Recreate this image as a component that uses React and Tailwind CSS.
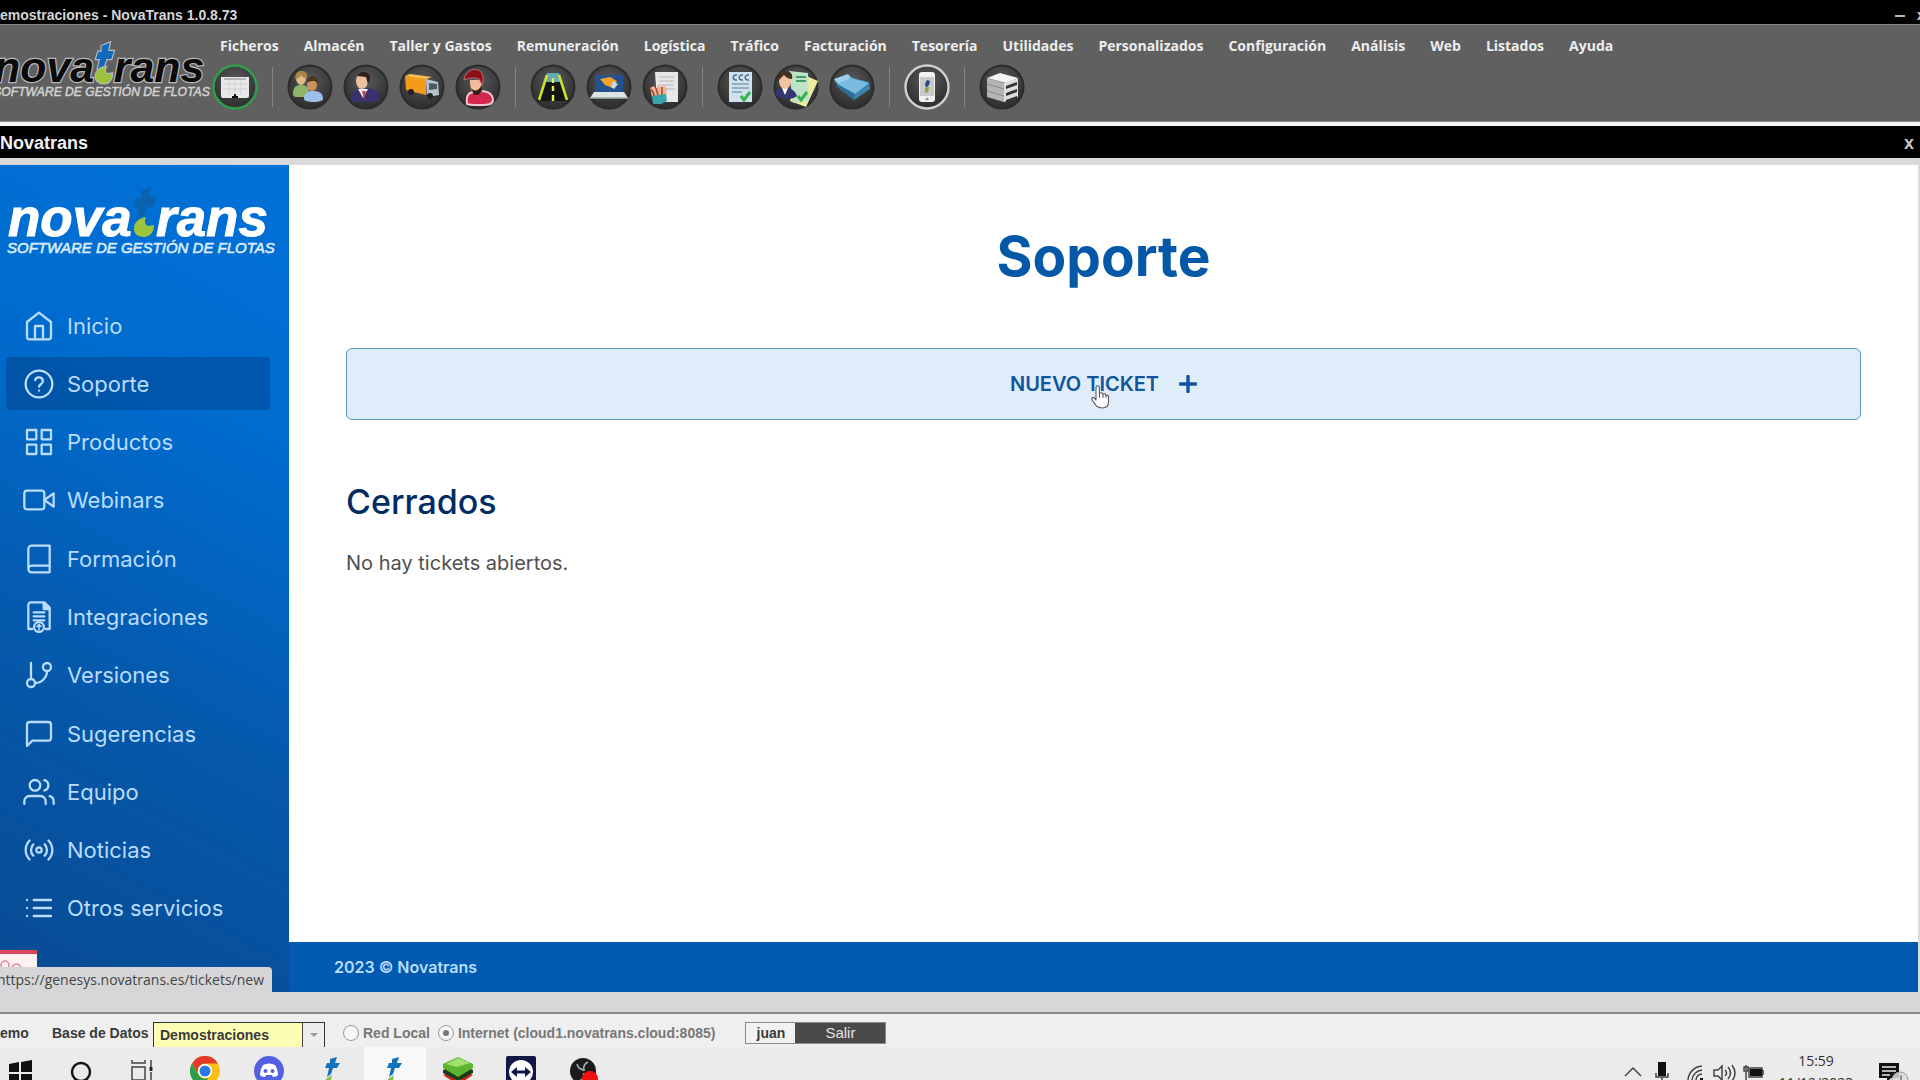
import React from "react";

const MENU = [
  "Ficheros", "Almacén", "Taller y Gastos", "Remuneración", "Logística", "Tráfico", "Facturación", "Tesorería",
  "Utilidades", "Personalizados", "Configuración", "Análisis", "Web", "Listados", "Ayuda",
];

function Logo({ className, ink, leaf, tag, glow }) {
  const halo = glow ? { stroke: "#b9b9b9", strokeWidth: 3, paintOrder: "stroke" } : {};
  const letters = glow ? halo : { stroke: ink, strokeWidth: 1 };
  return (
    <svg viewBox="0 0 262 68" className={className} role="img" aria-label="novatrans">
      <g fontFamily="Liberation Sans, Arial, sans-serif" fontWeight="700" fontStyle="italic">
        <text x="0" y="50" fontSize="53" fill={ink} {...letters}>nova</text>
        <text x="148" y="50" fontSize="53" fill={ink} {...letters}>rans</text>
        <text x="-1" y="67" fontSize="15" fontWeight="400" fill={tag} stroke={tag} strokeWidth="0.6">
          SOFTWARE DE GESTIÓN DE FLOTAS
        </text>
      </g>
      <path d="M133 5 143 1 141 11h7l-3 10h-6l-3 9c-3 0-6 2-8 5l3-14h-5l3-9h4z" fill={leaf} {...halo} />
      <path d="M138 31c-2 4-1 8 2 9l6-1c0 7-4 12-10 12-7 0-11-4-10-10 1-6 6-9 12-10z" fill="#9cc43c" {...halo} />
    </svg>
  );
}

/* ---- round toolbar icons ---- */
const TOOLS = {
  ficheros: {
    ring: "#2f9e4f",
    art: (
      <g>
        <path d="M9 13h28v19q0 2-2 2H11q-2 0-2-2z" fill="#e8e8e8" />
        <path d="M12 14h22v2H12z" fill="#b5b5b5" />
        <path d="M11 20h24M11 25h24M17 17v14M23 17v12M29 17v14" stroke="#d0d0d0" />
        <path d="M20 34v-2h2v-2h2v2h2v2z" fill="#111" />
      </g>
    ),
  },
  usuarios: {
    art: (
      <g>
        <path d="M6 30c0-7 3-9 8-9s8 2 8 7l-3 5H9c-2 0-3-1-3-3z" fill="#8fb36b" />
        <ellipse cx="14" cy="14" rx="5" ry="7" fill="#e2b988" />
        <path d="M8 15c0-6 3-8 7-8s6 3 5 7c-3 0-5-1-6-3-1 2-3 4-6 4z" fill="#a88449" />
        <path d="M17 35c0-6 3-8 9-8s10 2 10 8c0 4-19 4-19 0z" fill="#9cc0ea" />
        <ellipse cx="25" cy="21" rx="5" ry="6" fill="#c98f5c" />
        <path d="M20 19c0-5 3-7 6-7s6 3 5 8l-3-3c-3 0-6 0-8 2z" fill="#4f3620" />
      </g>
    ),
  },
  ejecutivo: {
    art: (
      <g>
        <path d="M9 37c-1-9 3-12 11-13 9 0 16 2 17 10 0 3-3 4-6 4H12c-2 0-3 0-3-1z" fill="#3a3270" />
        <path d="m15 25 5 9 5-9z" fill="#f2f2f2" />
        <path d="m19 27 2 9 2-9z" fill="#c04848" />
        <ellipse cx="19" cy="17" rx="6" ry="8" fill="#edc0a0" />
        <path d="M14 12c2-5 12-6 13 1 0 4-1 5-2 7l-2-7z" fill="#33201a" />
      </g>
    ),
  },
  camion: {
    art: (
      <g>
        <path d="m6 12 21 2v17L7 26z" fill="#f39c1c" />
        <path d="m6 12 5-2 22 3-6 2z" fill="#ffc257" />
        <path d="M27 15 39 18l1 13-12 2z" fill="#b9c3cb" />
        <path d="m30 19 8 1v5l-8 1z" fill="#4a5a66" />
        <circle cx="12" cy="28" r="3" fill="#222" />
        <circle cx="31" cy="32" r="3" fill="#222" />
      </g>
    ),
  },
  conductor: {
    art: (
      <g>
        <path d="M12 40c-1-8 1-12 8-12l8-1c7 1 10 4 10 9 0 4-4 5-13 5-7 0-12 0-13-1z" fill="#d2264c" stroke="#f0c9cf" strokeWidth="2" />
        <path d="M15 16h11c1 7-1 14-5 14s-6-6-6-14z" fill="#f1bd9b" />
        <path d="M16 24c3 4 8 3 10-2l1 5-4 4h-4z" fill="#33201a" />
        <path d="M9 16c1-8 8-12 14-10 5 2 6 8 4 15l-3-6c-5-2-10-1-15 1z" fill="#8e0f1b" stroke="#d88" strokeWidth="0.7" />
      </g>
    ),
  },
  carretera: {
    art: (
      <g>
        <path d="M17 9h12l10 28H7z" fill="#151515" />
        <path d="M17 9h12l3 9H14z" fill="#67a9b8" />
        <path d="M17 11 9 36M29 11l8 25" stroke="#cfe030" strokeWidth="2.6" />
        <path d="M23 14v5m0 3v5m0 4v6" stroke="#e4ef4c" strokeWidth="2.4" />
      </g>
    ),
  },
  portatil: {
    art: (
      <g>
        <path d="M9 11h28v17H9z" fill="#24518f" />
        <path d="m14 15 10-2 7 4-4 7-8-3z" fill="#f2a12b" />
        <path d="m27 17 5 3-4 5-3-2z" fill="#cbd6de" />
        <path d="M8 28h30l4 6H4z" fill="#dfe2e6" />
        <path d="M4 34h38" stroke="#9aa" strokeWidth="1.5" />
      </g>
    ),
  },
  nomina: {
    art: (
      <g>
        <path d="M13 8h23v30H15z" fill="#e7e7e7" />
        <path d="M17 13h15M17 17h15M17 21h15M24 25h9" stroke="#b4b4b4" />
        <path d="m8 24 4-2 2 3 2-4 3 2 3-2 3 4-1 8H10z" fill="#efb59a" />
        <path d="M8 25c3 2 4 4 4 7M20 23v8M14 24l2 7" stroke="#a34a38" strokeWidth="1.6" fill="none" />
        <path d="m10 32 14-2 1 7-6 3h-8z" fill="#38a5ac" />
      </g>
    ),
  },
  albaran: {
    art: (
      <g>
        <path d="M12 8h23v30H12z" fill="#cfe1ea" />
        <path d="M20 11c-5-1-5 6 0 5m6-5c-5-1-5 6 0 5m6-5c-5-1-5 6 0 5" stroke="#3f678a" strokeWidth="1.5" fill="none" />
        <path d="M15 20h17M15 24h17M15 28h10" stroke="#7ea0b5" strokeWidth="1.4" />
        <path d="m24 32 3 4 6-8" stroke="#37b34a" strokeWidth="3" fill="none" />
      </g>
    ),
  },
  clientes: {
    art: (
      <g>
        <path d="m26 9 19 8-12 26-16-6z" fill="#f0ea9c" />
        <path d="m16 7 19 2 1 28-16 2z" fill="#bfe3c8" />
        <path d="M23 13h10m-10 4h10" stroke="#3f9b62" strokeWidth="2" />
        <path d="m25 32 3 4 6-8" stroke="#37b34a" strokeWidth="3" fill="none" />
        <path d="M3 31c-1-5 3-8 8-8s11 3 13 9c-4 4-17 4-21-1z" fill="#34386e" />
        <path d="m9 24 3 7 3-7z" fill="#fff" />
        <ellipse cx="12" cy="17" rx="6" ry="8" fill="#f0c3a2" />
        <path d="M6 16c-1-7 3-10 7-9 5 0 7 4 6 8-4 0-6-2-8-4z" fill="#46301f" />
      </g>
    ),
  },
  carpeta: {
    art: (
      <g>
        <path d="m5 17 15-6 4 3 16 4 1 7-16 11z" fill="#3f86ae" />
        <path d="m5 15 14-5 3 4-12 7z" fill="#9bd0ec" />
        <path d="m8 20 14-6 18 5-14 11z" fill="#78bbdf" />
        <path d="m8 20 18 10-1 6L7 22z" fill="#2e6d95" />
      </g>
    ),
  },
  movil: {
    ring: "#d0d0d0",
    art: (
      <g>
        <rect x="15" y="8" width="16" height="30" rx="3" fill="#f1f1f1" />
        <path d="M16 13h14v19H16z" fill="#c9c9c9" />
        <path d="m23 16 3 1-1 4-3 3-1-4z" fill="#22488c" />
        <path d="m21 24 4-1-1 5-3 1z" fill="#86a83a" />
        <circle cx="23" cy="35" r="1.6" fill="#999" />
      </g>
    ),
  },
  servidor: {
    art: (
      <g>
        <path d="m8 14 13-5 18 5-12 5z" fill="#f4f4f4" />
        <path d="m8 14 17 5v19L8 33z" fill="#b5b5b5" />
        <path d="m25 19 14-5v19l-14 5z" fill="#dedede" />
        <path d="m27 22 11-4v3l-11 4zm0 7 11-4v3l-11 4zm0 7 11-4v2l-11 4z" fill="#333" />
        <path d="m8 20 17 5m-17 2 17 5" stroke="#8a8a8a" />
      </g>
    ),
  },
};
const TOOL_GROUPS = [
  ["ficheros"],
  ["usuarios", "ejecutivo", "camion", "conductor"],
  ["carretera", "portatil", "nomina"],
  ["albaran", "clientes", "carpeta"],
  ["movil"],
  ["servidor"],
];

function ToolButton({ name }) {
  const t = TOOLS[name];
  return (
    <button type="button" aria-label={name} className="h-[46px] w-[46px] shrink-0">
      <svg viewBox="0 0 46 46" className="h-full w-full">
        <defs>
          <radialGradient id={"g-" + name} cx="50%" cy="35%" r="60%">
            <stop offset="0" stopColor="#5a5a5a" />
            <stop offset="1" stopColor="#303030" />
          </radialGradient>
        </defs>
        <circle cx="23" cy="23" r="21.5" fill={`url(#g-${name})`} stroke={t.ring || "#2c2c2c"} strokeWidth={t.ring ? 2.4 : 2} />
        {t.art}
      </svg>
    </button>
  );
}

/* ---- sidebar ---- */
const NAV = [
  ["Inicio", <g key="i"><path d="m3 9 9-7 9 7v11a2 2 0 0 1-2 2H5a2 2 0 0 1-2-2z" /><path d="M9 22V12h6v10" /></g>],
  ["Soporte", <g key="i"><circle cx="12" cy="12" r="10" /><path d="M9.1 9a3 3 0 0 1 5.8 1c0 2-2.9 2.6-2.9 4" /><path d="M12 17h.01" /></g>],
  ["Productos", <g key="i"><path d="M3 3h7v7H3zM14 3h7v7h-7zM14 14h7v7h-7zM3 14h7v7H3z" /></g>],
  ["Webinars", <g key="i"><path d="m23 7-7 5 7 5z" /><rect x="1" y="5" width="15" height="14" rx="2" /></g>],
  ["Formación", <g key="i"><path d="M4 19.5V4.5A2.5 2.5 0 0 1 6.5 2H20v20H6.5A2.5 2.5 0 0 1 4 19.5 2.5 2.5 0 0 1 6.5 17H20" /></g>],
  ["Integraciones", <g key="i"><path d="M7 21H4V3a2 2 0 0 1 2-2h10l4 4v16h-3" /><path d="M15.5 1.5V6H20z" fill="currentColor" /><path d="M8 8.5h8M8 11.5h8M8 14.5h8" /><circle cx="12" cy="19.5" r="3.7" /><path d="M12 21.5V18m-1.400 1 1.400-1.300 1.400 1.300" strokeWidth="1.2" /></g>],
  ["Versiones", <g key="i"><path d="M6 3v12" /><circle cx="18" cy="6" r="3" /><circle cx="6" cy="18" r="3" /><path d="M18 9a9 9 0 0 1-9 9" /></g>],
  ["Sugerencias", <g key="i"><path d="M21 15a2 2 0 0 1-2 2H7l-4 4V5a2 2 0 0 1 2-2h14a2 2 0 0 1 2 2z" /></g>],
  ["Equipo", <g key="i"><path d="M17 21v-2a4 4 0 0 0-4-4H5a4 4 0 0 0-4 4v2" /><circle cx="9" cy="7" r="4" /><path d="M23 21v-2a4 4 0 0 0-3-3.87M16 3.13a4 4 0 0 1 0 7.75" /></g>],
  ["Noticias", <g key="i"><circle cx="12" cy="12" r="2" /><path d="M16.240 7.760a6 6 0 0 1 0 8.490m-8.480-.010a6 6 0 0 1 0-8.490m11.310-2.820a10 10 0 0 1 0 14.140m-14.140 0a10 10 0 0 1 0-14.140" /></g>],
  ["Otros servicios", <g key="i"><path d="M8 6h13M8 12h13M8 18h13M3 6h.01M3 12h.01M3 18h.01" /></g>],
];

function Sidebar() {
  return (
    <aside className="relative flex w-[289px] shrink-0 flex-col bg-[linear-gradient(208deg,#0071d8_0%,#006bcd_32%,#0559ac_62%,#084a92_100%)]">
      <Logo className="ml-2 mt-[21px] w-[262px] shrink-0 overflow-visible" ink="#ffffff" leaf="#0a62ae" tag="#d8ebff" />
      <nav className="mb-[57px] mt-[45px] flex flex-1 flex-col justify-between pl-1.5 pr-[19px]">
        {NAV.map(([label, icon]) => (
          <a
            key={label}
            href="#"
            aria-current={label === "Soporte" ? "page" : undefined}
            className="flex h-[53px] items-center gap-3 rounded pl-[17px] text-[22px] leading-7 text-[#b9dcff] aria-[current=page]:bg-[#003b80]/45"
          >
            <svg viewBox="0 0 24 24" className="h-8 w-8 shrink-0" fill="none" stroke="currentColor" strokeWidth="1.7" strokeLinecap="round" strokeLinejoin="round">
              {icon}
            </svg>
            {label}
          </a>
        ))}
      </nav>
      <div className="absolute bottom-0 left-0 h-[42px] w-[37px] overflow-hidden border-t-4 border-[#d8475c] bg-[#fdf1f1]">
        <svg viewBox="0 0 37 38" className="h-[38px] w-[37px]" fill="none" stroke="#e08a92" strokeWidth="1.5">
          <circle cx="5" cy="11" r="4" />
          <path d="M12 13q4-6 9 0" />
        </svg>
      </div>
      <div className="absolute bottom-0 left-0 flex h-[25px] w-[272px] items-center justify-end overflow-hidden whitespace-nowrap rounded-tr bg-[#d6d6d8] pr-2 font-['Open_Sans',sans-serif] text-[14px] leading-5 text-[#444]">
        https://genesys.novatrans.es/tickets/new
      </div>
    </aside>
  );
}

function TMark({ active }) {
  return (
    <button type="button" aria-label="NovaTrans" className={active ? "flex h-full w-[62px] justify-center bg-[#f8f8f8] pt-2.5" : "flex h-full w-[62px] justify-center pt-2.5"}>
      <svg viewBox="0 0 20 28" className="h-7 w-5">
        <path d="m7 2 7-2-2 6h5l-3 5h-4l-2 6-4 3 2-9H2l2-5h3z" fill="#1173bd" />
        <path d="m9 18-6 4-1 6h9v-4l-3-1z" fill="#7cc243" />
      </svg>
    </button>
  );
}

function TaskIcon({ label, width = "w-[62px]", children }) {
  return (
    <button type="button" aria-label={label} className={"flex h-full justify-center pt-[9px] " + width}>
      <svg viewBox="0 0 30 30" className="h-[30px] w-[30px]">{children}</svg>
    </button>
  );
}

function Taskbar() {
  return (
    <footer className="flex h-[33px] shrink-0 justify-between overflow-hidden bg-[#ebebeb] font-['Open_Sans',sans-serif]">
      <div className="flex">
        <TaskIcon label="Inicio" width="w-10">
          <path d="m4 8 10-2v10H4zm12-2 11-2v12H16zM4 18h10v10L4 26zm12 0h11v12l-11-2z" fill="#111" />
        </TaskIcon>
        <span className="w-2.5" />
        <TaskIcon label="Buscar">
          <circle cx="15" cy="16" r="9" fill="none" stroke="#151515" strokeWidth="2.4" />
        </TaskIcon>
        <TaskIcon label="Vista de tareas" width="w-[60px]">
          <path d="M5 11h13v13H5zM5 4v3h13V4M5 30v-2h13v2M24 4v7m0 5v14" fill="none" stroke="#444" strokeWidth="1.5" />
          <path d="M22.5 11h3v4h-3z" fill="#222" />
        </TaskIcon>
        <TaskIcon label="Chrome" width="w-[66px]">
          <circle cx="15" cy="15" r="15" fill="#fbc116" />
          <path d="M2 7.5A15 15 0 0 1 28 7.5H15a7.500 7.500 0 0 0-6.500 11z" fill="#e23b2e" />
          <path d="M2 7.5 8.500 18.800A7.500 7.500 0 0 0 18 22l-3 8A15 15 0 0 1 2 7.500z" fill="#2b9f4c" />
          <circle cx="15" cy="15" r="7" fill="#fff" />
          <circle cx="15" cy="15" r="5.5" fill="#2a78e4" />
        </TaskIcon>
        <TaskIcon label="Discord">
          <circle cx="15" cy="15" r="15" fill="#5360e2" />
          <path d="M9 9c4-2 8-2 12 0 2 3 3 7 3 10-2 2-4 2-5 2l-1-2h-6l-1 2c-1 0-3 0-5-2 0-3 1-7 3-10z" fill="#fff" />
          <circle cx="11.5" cy="15" r="2" fill="#5360e2" />
          <circle cx="18.5" cy="15" r="2" fill="#5360e2" />
        </TaskIcon>
        <div className="ml-0.5 flex">
          <TMark />
          <TMark active />
        </div>
        <TaskIcon label="BlueStacks" width="w-16">
          <path d="m0 19 15-6 15 6-15 10z" fill="#c8281e" />
          <path d="m0 16 15-6 15 6-15 9z" fill="#f4c21e" />
          <path d="m0 14 15-6 15 6v3l-15 8L0 17z" fill="#1c3b1c" />
          <path d="M0 8 15 1l15 7v4l-15 9L0 12z" fill="#5cb531" />
          <path d="m3 8 12-6 12 5-13 4z" fill="#a4e070" />
        </TaskIcon>
        <TaskIcon label="TeamViewer">
          <rect width="30" height="30" rx="2" fill="#111845" />
          <circle cx="15" cy="16" r="12" fill="#fff" />
          <path d="m5 16 6-5v3.500h8V11l6 5-6 5v-3.500h-8V21z" fill="#111845" />
        </TaskIcon>
        <TaskIcon label="OBS" width="w-16">
          <circle cx="14" cy="15" r="13" fill="#1b1b1b" />
          <path d="M8 8c1 4 4 6 8 6m3-8c-4 2-5 5-4 9m-5 10c4-1 5-4 5-8" fill="none" stroke="#aaa" strokeWidth="1.6" />
          <circle cx="21" cy="23" r="8" fill="#f01010" />
        </TaskIcon>
      </div>
      <div className="flex pr-2.5 pt-[15px] text-[#333]">
        <svg viewBox="0 0 142 26" className="h-[26px] w-[142px]" fill="none" stroke="#444" strokeWidth="1.5">
          <path d="m1 14 8-8 8 8" />
          <path d="M34 0h8v14h-8z" fill="#111" stroke="none" />
          <path d="M32 11v4h12v-4M38 15v6" />
          <path d="M64 18A15 15 0 0 1 78 4M68 18a11 11 0 0 1 10-10M72 18a6 6 0 0 1 6-6" />
          <path d="M76 16h3v6h-3z" fill="#111" stroke="none" />
          <path d="M90 8v6h4l4 4V4l-4 4zM101 8q3 3 0 6M104 5q5 6 0 12M108 3q6 8 0 16" />
          <path d="M125 6h13v9h-13zM139 8v5" />
          <path d="M126 7h12v7h-12z" fill="#111" stroke="none" />
          <path d="M122 3v5m-2-3h4v4h-4zM122 9v9" />
        </svg>
        <div className="-mt-3 ml-2.5 flex w-20 flex-col text-center text-[14px] leading-[22px]">
          <span>15:59</span>
          <span>11/12/2023</span>
        </div>
        <svg viewBox="0 0 36 30" className="ml-[18px] h-[30px] w-9">
          <path d="M5 1h20v15h-8l-4 4v-4H5z" fill="#111" />
          <path d="M8 5h14M8 9h14M8 13h8" stroke="#eee" strokeWidth="1.5" />
          <circle cx="26" cy="18" r="8" fill="#dcdcdc" fillOpacity="0.85" stroke="#999" />
          <path d="M27 13v9" stroke="#777" strokeWidth="1.5" />
        </svg>
      </div>
    </footer>
  );
}

export default function App() {
  return (
    <div className="flex h-screen flex-col overflow-hidden bg-[#efefef] font-['Inter',sans-serif]">
      <div className="flex h-6 shrink-0 items-center justify-between bg-black pt-1.5 font-['Liberation_Sans',sans-serif] text-[14px] font-bold leading-4 text-[#d6d6d6]">
        <h1>emostraciones - NovaTrans 1.0.8.73</h1>
        <div className="flex gap-3">
          <button type="button" aria-label="Minimizar" className="mt-2 h-0.5 w-2.5 bg-[#b5b5b5]" />
          <button type="button" aria-label="Cerrar ventana" className="w-[3px] overflow-hidden">x</button>
        </div>
      </div>

      <header className="flex h-[98px] shrink-0 border-y border-[#8a8a8a] bg-[#606060]">
        <div className="flex w-[212px] shrink-0">
          <Logo className="-ml-1.5 mt-[17px] h-[55px] w-[212px] overflow-visible" ink="#0a0a0a" leaf="#1268bd" tag="#d2d2d2" glow />
        </div>
        <div className="flex flex-col pt-[11px]">
          <nav className="flex gap-[25px] whitespace-nowrap pl-2 font-['Open_Sans',sans-serif] text-[14px] font-bold leading-5 text-[#ededed]">
            {MENU.map((m) => (
              <button type="button" key={m}>{m}</button>
            ))}
          </nav>
          <div className="mt-2 flex items-center">
            {TOOL_GROUPS.map((group, i) => (
              <React.Fragment key={group[0]}>
                {i > 0 && <span className="mx-3.5 h-10 w-px bg-[#858585]" />}
                <div className="flex gap-2.5">
                  {group.map((n) => <ToolButton key={n} name={n} />)}
                </div>
              </React.Fragment>
            ))}
          </div>
        </div>
      </header>

      <div className="h-1 shrink-0 bg-[#f4f4f4]" />
      <div className="flex h-8 shrink-0 items-center justify-between bg-black pr-1.5 pt-0.5 font-['Liberation_Sans',sans-serif] text-[18px] font-bold leading-5 text-[#f0f0f0]">
        <h2>Novatrans</h2>
        <button type="button" aria-label="Cerrar" className="text-[#c8c8c8]">x</button>
      </div>
      <div className="h-[7px] shrink-0 bg-[#d9d9d9]" />

      <div className="flex min-h-0 flex-1 bg-[#dcdcdc] pr-0.5">
        <Sidebar />
        <div className="flex flex-1 flex-col bg-white">
          <main className="flex flex-1 flex-col px-[57px] pt-[59px]">
            <h2 className="text-center text-[55px] font-bold leading-[64px] text-[#0359a8]">Soporte</h2>
            <button type="button" className="relative mt-[60px] flex items-center justify-center gap-5 rounded-md border border-[#5f97cb] bg-[#deedf9] py-[21px] text-[20px] font-semibold leading-7 text-[#11559f]">
              NUEVO TICKET
              <svg viewBox="0 0 18 18" className="h-[18px] w-[18px]" stroke="currentColor" strokeWidth="3.4" strokeLinecap="round">
                <path d="M9 1.5v15M1.5 9h15" />
              </svg>
              <svg viewBox="0 0 20 24" className="absolute left-1/2 top-9 -ml-3.5 h-6 w-5">
                <path d="M6 15V2.5a1.700 1.700 0 0 1 3.400 0V9q.5-1.500 2-1.200T13 9.500q.5-1 1.800-.7T16 10.500q2-.8 2.500 1v5c0 4-2 6.500-6 6.500-5 0-7-2-10.500-8.500-.8-1.500.5-2.800 2-1.800z" fill="#fff" stroke="#555" strokeWidth="1.1" strokeLinejoin="round" />
                <path d="M9.4 9v4m3.600-3.500V13m3-2.500V13" stroke="#555" fill="none" />
              </svg>
            </button>
            <h3 className="mt-[62px] text-[34px] font-medium leading-10 text-[#012c63]">Cerrados</h3>
            <p className="mt-[27px] text-[20px] leading-7 text-[#4f4f4f]">No hay tickets abiertos.</p>
          </main>
          <div className="flex h-[50px] shrink-0 items-center bg-[#005bb0] pl-[45px] text-[16px] font-semibold leading-6 text-[#b9dcff]">
            2023 © Novatrans
          </div>
        </div>
      </div>

      <div className="h-[22px] shrink-0 border-b-2 border-[#8b8b8b] bg-[#d8d6d7]" />
      <form className="flex h-[33px] shrink-0 items-center pt-1 font-['Liberation_Sans',sans-serif] text-[14px] font-bold leading-5 text-[#3a3a3a]">
        <span className="w-[52px]">emo</span>
        <label htmlFor="bd" className="w-[101px]">Base de Datos</label>
        <div className="relative mt-1 h-[25px] w-[172px]">
          <select id="bd" className="h-full w-full appearance-none border border-b-0 border-[#333] bg-[#fdfdb4] pl-1.5 font-bold leading-5 text-[#3a3a3a]">
            <option>Demostraciones</option>
          </select>
          <span className="pointer-events-none absolute right-px top-px flex h-6 w-[22px] items-center justify-center border-l border-[#444] bg-[#eee]">
            <span className="border-x-4 border-t-4 border-x-transparent border-t-[#999]" />
          </span>
        </div>
        <label className="ml-[18px] flex items-center gap-1 text-[#777]">
          <input type="radio" name="red" className="grid h-4 w-4 appearance-none rounded-full border border-[#999] bg-[#f6f6f6]" />
          Red Local
        </label>
        <label className="ml-2 flex items-center gap-1 text-[#777]">
          <input type="radio" name="red" defaultChecked className="grid h-4 w-4 appearance-none place-items-center rounded-full border border-[#999] bg-[#f6f6f6] before:h-1.5 before:w-1.5 before:rounded-full before:bg-[#777]" />
          Internet (cloud1.novatrans.cloud:8085)
        </label>
        <div className="ml-[30px] flex h-[22px] w-[141px] items-stretch border border-[#8a8a8a]">
          <span className="flex flex-1 items-center justify-center bg-[#f2f2f2]">juan</span>
          <button type="button" className="w-[90px] bg-[#4a4a4a] text-[15px] font-normal text-[#e4e4e4]">Salir</button>
        </div>
      </form>
      <Taskbar />
    </div>
  );
}
